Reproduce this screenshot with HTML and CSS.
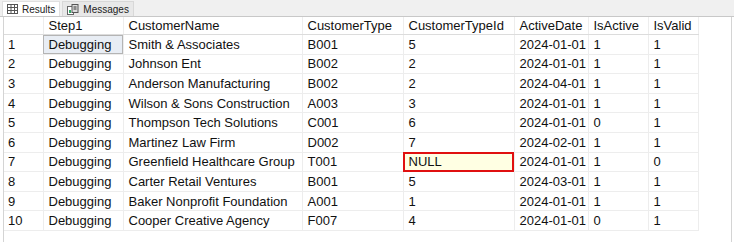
FILE: index.html
```html
<!DOCTYPE html>
<html lang="en">
<head>
    <meta charset="UTF-8">
    <title>Results</title>
    <link rel="stylesheet" href="styles.css">
</head>
<body>
    <div class="tabs">
        <div class="tab active">
            <svg width="11" height="10" viewBox="0 0 11 10"><rect x="0.5" y="0.5" width="10" height="9" fill="#fff" stroke="#555"/><path d="M0.5 3.5h10M0.5 6.5h10M4 0.5v9M7.5 0.5v9" stroke="#555" fill="none"/></svg>
            Results
        </div>
        <div class="tab">
            <svg width="12" height="11" viewBox="0 0 12 11"><rect x="0.5" y="2.5" width="6" height="8" fill="#fff" stroke="#666"/><rect x="5" y="0.5" width="6" height="8" fill="#ddd" stroke="#555"/><path d="M6.5 3h3M6.5 5h3" stroke="#333"/><rect x="2" y="6" width="2" height="3" fill="#3a6"/></svg>
            Messages
        </div>
    </div>

    <div class="grid">
        <table class="results">
            <colgroup>
                <col style="width:39px"><col style="width:80px"><col style="width:179px"><col style="width:101px">
                <col style="width:111px"><col style="width:74px"><col style="width:60px"><col style="width:50px">
            </colgroup>
            <thead>
                <tr><th></th><th>Step1</th><th>CustomerName</th><th>CustomerType</th><th>CustomerTypeId</th><th>ActiveDate</th><th>IsActive</th><th>IsValid</th></tr>
            </thead>
            <tbody>
                <tr><td>1</td><td class="focus">Debugging</td><td>Smith &amp; Associates</td><td>B001</td><td>5</td><td>2024-01-01</td><td>1</td><td>1</td></tr>
                <tr><td>2</td><td>Debugging</td><td>Johnson Ent</td><td>B002</td><td>2</td><td>2024-01-01</td><td>1</td><td>1</td></tr>
                <tr><td>3</td><td>Debugging</td><td>Anderson Manufacturing</td><td>B002</td><td>2</td><td>2024-04-01</td><td>1</td><td>1</td></tr>
                <tr><td>4</td><td>Debugging</td><td>Wilson &amp; Sons Construction</td><td>A003</td><td>3</td><td>2024-01-01</td><td>1</td><td>1</td></tr>
                <tr><td>5</td><td>Debugging</td><td>Thompson Tech Solutions</td><td>C001</td><td>6</td><td>2024-01-01</td><td>0</td><td>1</td></tr>
                <tr><td>6</td><td>Debugging</td><td>Martinez Law Firm</td><td>D002</td><td>7</td><td>2024-02-01</td><td>1</td><td>1</td></tr>
                <tr><td>7</td><td>Debugging</td><td>Greenfield Healthcare Group</td><td>T001</td><td class="null">NULL</td><td>2024-01-01</td><td>1</td><td>0</td></tr>
                <tr><td>8</td><td>Debugging</td><td>Carter Retail Ventures</td><td>B001</td><td>5</td><td>2024-03-01</td><td>1</td><td>1</td></tr>
                <tr><td>9</td><td>Debugging</td><td>Baker Nonprofit Foundation</td><td>A001</td><td>1</td><td>2024-01-01</td><td>1</td><td>1</td></tr>
                <tr><td>10</td><td>Debugging</td><td>Cooper Creative Agency</td><td>F007</td><td>4</td><td>2024-01-01</td><td>0</td><td>1</td></tr>
            </tbody>
        </table>
    </div>
</body>
</html>
```

FILE: styles.css
```css
:root {
    --line: #ededed;
    --frame: #d4d4d4;
    --text: #111;
}

body {
    margin: 0;
    width: 734px;
    height: 242px;
    background: #fff;
    font-family: "Liberation Sans", Arial, sans-serif;
    color: var(--text);
    overflow: hidden;
}

.tabs {
    display: flex;
    height: 16px;
    padding-left: 2px;
    background: #f0f0f0;
    border-bottom: 1px solid #c8c8c8;
}

.tab {
    display: flex;
    align-items: center;
    gap: 4px;
    padding: 0 4px;
    margin-top: 1px;
    font-size: 10px;
    color: #222;
    background: #e8e8e8;
    border: 1px solid #d8d8d8;
    border-bottom: none;
}

.tab.active {
    background: #fff;
    border-color: #e0e0e0;
    margin-right: 2px;
}

.grid {
    height: 225px;
    margin: 0 2px 0 3px;
    border-left: 1px solid var(--frame);
    border-right: 1px solid var(--frame);
}

.results {
    border-collapse: collapse;
    table-layout: fixed;
    width: 694px;
    font-size: 13px;
    line-height: 15px;
}

.results th,
.results td {
    padding: 0 0 0 5px;
    text-align: left;
    white-space: nowrap;
    overflow: hidden;
    border-right: 1px solid var(--line);
    border-bottom: 1px solid var(--line);
}

.results th {
    height: 17px;
    font-weight: normal;
    border-bottom: 1px solid #dcdcdc;
}

.results td {
    height: 18.6px;
}

.results td:first-child {
    padding-left: 4px;
}

.results td.focus {
    background: #e8edf4;
    outline: 1px solid #b4b4b4;
    outline-offset: -1px;
}

.results td.null {
    background: #ffffe3;
    outline: 2px solid #e01010;
    outline-offset: -2px;
}
```
